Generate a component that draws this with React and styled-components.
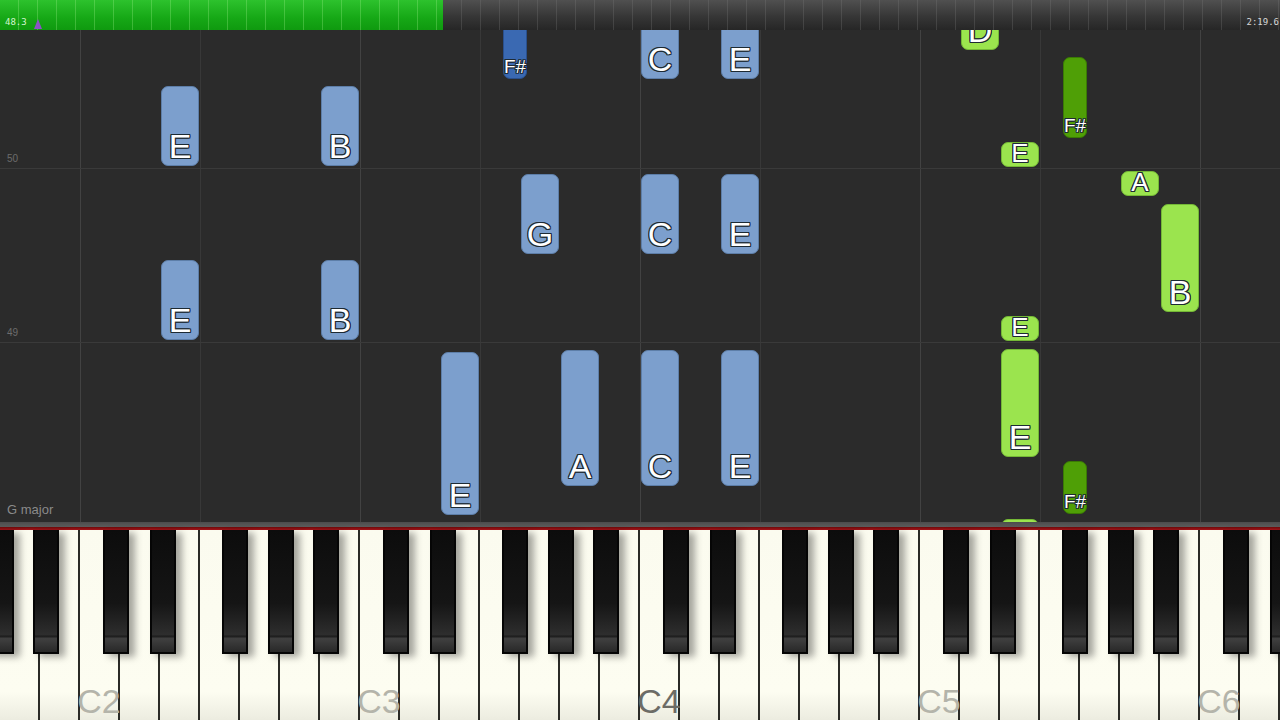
import React from 'react'
import styled, { createGlobalStyle } from 'styled-components'

const ROLL_TOP = 30

const notes = [
  { x: 160, top: 86, bot: 166, kind: 'blue', label: 'E' },
  { x: 320, top: 86, bot: 166, kind: 'blue', label: 'B' },
  { x: 160, top: 260, bot: 340, kind: 'blue', label: 'E' },
  { x: 320, top: 260, bot: 340, kind: 'blue', label: 'B' },
  { x: 502, top: 10, bot: 79, kind: 'navy', label: 'F#' },
  { x: 640, top: 10, bot: 79, kind: 'blue', label: 'C' },
  { x: 720, top: 10, bot: 79, kind: 'blue', label: 'E' },
  { x: 520, top: 174, bot: 254, kind: 'blue', label: 'G' },
  { x: 640, top: 174, bot: 254, kind: 'blue', label: 'C' },
  { x: 720, top: 174, bot: 254, kind: 'blue', label: 'E' },
  { x: 440, top: 352, bot: 515, kind: 'blue', label: 'E' },
  { x: 560, top: 350, bot: 486, kind: 'blue', label: 'A' },
  { x: 640, top: 350, bot: 486, kind: 'blue', label: 'C' },
  { x: 720, top: 350, bot: 486, kind: 'blue', label: 'E' },
  { x: 960, top: 0, bot: 50, kind: 'lime', label: 'D' },
  { x: 1062, top: 57, bot: 138, kind: 'forest', label: 'F#' },
  { x: 1000, top: 142, bot: 167, kind: 'lime', label: 'E' },
  { x: 1120, top: 171, bot: 196, kind: 'lime', label: 'A' },
  { x: 1160, top: 204, bot: 312, kind: 'lime', label: 'B' },
  { x: 1000, top: 316, bot: 341, kind: 'lime', label: 'E' },
  { x: 1000, top: 349, bot: 457, kind: 'lime', label: 'E' },
  { x: 1062, top: 461, bot: 514, kind: 'forest', label: 'F#' },
  { x: 1000, top: 519, bot: 540, kind: 'lime', label: '' },
]

const colors = {
  blue: { bg: '#7c9fcd', edge: '#5d7ea8' },
  navy: { bg: '#3a69b2', edge: '#2a508c' },
  lime: { bg: '#9be44e', edge: '#74b836' },
  forest: { bg: '#4f9f06', edge: '#3a7a04' },
}

const gridLines = [
  { x: 80, strong: true },
  { x: 200 },
  { x: 360, strong: true },
  { x: 480 },
  { x: 640, strong: true },
  { x: 760 },
  { x: 920, strong: true },
  { x: 1040 },
  { x: 1200, strong: true },
]

const measures = [
  { y: 168, label: '50' },
  { y: 342, label: '49' },
]

const whiteNames = ['A', 'B', 'C', 'D', 'E', 'F', 'G']
const whiteKeys = Array.from({ length: 32 }, (_, i) => {
  const name = whiteNames[i % 7]
  const octave = Math.floor((i + 5) / 7) + 1
  return { i, label: name === 'C' ? `C${octave}` : '' }
})

const blackOffsets = [23, 70, 142, 188, 233]
const blackKeys = []
for (let c = -200; c < 1280; c += 280) {
  blackOffsets.forEach((o) => {
    const x = c + o
    if (x + 26 > 0 && x < 1280) blackKeys.push(x)
  })
}

const GlobalStyle = createGlobalStyle`
  body {
    margin: 0;
    background: #2b2b2b;
    overflow: hidden;
    font-family: "Liberation Sans", Arial, sans-serif;
  }
`

const Screen = styled.div`
  width: 1280px;
  height: 720px;
  display: flex;
  flex-direction: column;
  overflow: hidden;
`

const TopBar = styled.div`
  height: 30px;
  display: flex;
  position: relative;
  flex-shrink: 0;
  box-shadow: inset 0 -1px 0 #151515;
`

const Filled = styled.div`
  width: 443px;
  background:
    repeating-linear-gradient(90deg, transparent 0 18px, rgba(160, 240, 140, 0.3) 18px 19px),
    linear-gradient(#2dc22d, #16a816 60%, #0f9a0f);
`

const Rest = styled.div`
  flex: 1;
  background:
    repeating-linear-gradient(90deg, transparent 0 18px, rgba(120, 120, 120, 0.3) 18px 19px),
    linear-gradient(#505050, #363636 55%, #262626);
`

const TimeText = styled.span`
  position: absolute;
  bottom: 3px;
  ${(p) => (p.right ? 'right: 1px;' : 'left: 5px;')}
  font-family: "DejaVu Sans Mono", monospace;
  font-size: 9px;
  color: ${(p) => (p.right ? '#d8d8d8' : '#d4f5d0')};
`

const Marker = styled.div`
  position: absolute;
  left: 34px;
  bottom: 1px;
  width: 0;
  height: 0;
  border-left: 4px solid transparent;
  border-right: 4px solid transparent;
  border-bottom: 10px solid #8b52c4;
`

const Roll = styled.div`
  height: 492px;
  position: relative;
  overflow: hidden;
  background: #2b2b2b;
  flex-shrink: 0;
`

const VLine = styled.div`
  position: absolute;
  top: 0;
  bottom: 0;
  width: 1px;
  background: ${(p) => (p.strong ? '#424242' : '#383838')};
`

const HLine = styled.div`
  position: absolute;
  left: 0;
  right: 0;
  height: 1px;
  background: #3a3a3a;
`

const MeasureLabel = styled.span`
  position: absolute;
  left: 7px;
  font-size: 10px;
  color: #6c6c6c;
`

const KeyLabel = styled.span`
  position: absolute;
  left: 7px;
  bottom: 5px;
  font-size: 13px;
  color: #8a8a8a;
`

const Note = styled.div`
  position: absolute;
  box-sizing: border-box;
  border-radius: 7px;
  background: ${(p) => colors[p.kind].bg};
  border: 1px solid ${(p) => colors[p.kind].edge};
  display: flex;
  flex-direction: column;
  justify-content: flex-end;
  align-items: center;
  padding-bottom: ${(p) => (p.short ? 0 : 2)}px;
`

const NoteText = styled.span`
  font-family: "Liberation Sans", Arial, sans-serif;
  line-height: 1;
  color: #fff;
  white-space: nowrap;
  text-shadow:
    1px 0 0 #1d2a33, -1px 0 0 #1d2a33, 0 1px 0 #1d2a33, 0 -1px 0 #1d2a33,
    1px 1px 0 #1d2a33, -1px -1px 0 #1d2a33, 1px -1px 0 #1d2a33, -1px 1px 0 #1d2a33;
`

const Keyboard = styled.div`
  flex: 1;
  display: flex;
  flex-direction: column;
`

const Rail = styled.div`
  height: 5px;
  background: linear-gradient(#4c4c4c, #5c5c5c);
`

const RedLine = styled.div`
  height: 3px;
  background: linear-gradient(#6e0a0a, #a5141a);
`

const Keys = styled.div`
  flex: 1;
  display: flex;
  position: relative;
`

const WhiteKey = styled.div`
  width: 40px;
  flex-shrink: 0;
  box-sizing: border-box;
  border-right: 2px solid #2a2a26;
  background: linear-gradient(#fbfbef, #fdfdf1 85%, #ecece0);
  display: flex;
  justify-content: center;
  align-items: flex-end;
  padding-bottom: 2px;
`

const WhiteLabel = styled.span`
  font-family: "Liberation Sans", Arial, sans-serif;
  font-size: 34px;
  line-height: 1;
  color: ${(p) => (p.dark ? '#6c6c66' : '#b4b4aa')};
`

const BlackKey = styled.div`
  position: absolute;
  top: 0;
  width: 26px;
  height: 124px;
  box-sizing: border-box;
  border: 2px solid #050505;
  border-top: none;
  background: linear-gradient(#0c0c0c, #151515 60%, #2e2e2e 86%, #1a1a1a 87%, #404040 89%, #282828);
  box-shadow: 6px 3px 7px rgba(0, 0, 0, 0.35);
`

const App = () => {
  return (
    <Screen>
      <GlobalStyle />
      <TopBar>
        <Filled />
        <Rest />
        <TimeText>48.3</TimeText>
        <Marker />
        <TimeText right>2:19.6</TimeText>
      </TopBar>
      <Roll>
        {gridLines.map(({ x, strong }) => (
          <VLine key={x} strong={strong} style={{ left: x }} />
        ))}
        {measures.map(({ y, label }) => (
          <React.Fragment key={label}>
            <HLine style={{ top: y - ROLL_TOP }} />
            <MeasureLabel style={{ top: y - ROLL_TOP - 15 }}>{label}</MeasureLabel>
          </React.Fragment>
        ))}
        <KeyLabel>G major</KeyLabel>
        {notes.map((n, i) => {
          const black = n.kind === 'navy' || n.kind === 'forest'
          const h = n.bot - n.top
          const size = black ? 19 : Math.min(34, Math.round(h * 1.04))
          return (
            <Note
              key={i}
              kind={n.kind}
              short={h < 40}
              style={{ left: n.x + 1, width: black ? 24 : 38, top: n.top - ROLL_TOP, height: h }}
            >
              {n.label && <NoteText style={{ fontSize: size }}>{n.label}</NoteText>}
            </Note>
          )
        })}
      </Roll>
      <Keyboard>
        <Rail />
        <RedLine />
        <Keys>
          {whiteKeys.map(({ i, label }) => (
            <WhiteKey key={i}>
              {label && <WhiteLabel dark={label === 'C4'}>{label}</WhiteLabel>}
            </WhiteKey>
          ))}
          {blackKeys.map((x) => (
            <BlackKey key={x} style={{ left: x }} />
          ))}
        </Keys>
      </Keyboard>
    </Screen>
  )
}

export default App
